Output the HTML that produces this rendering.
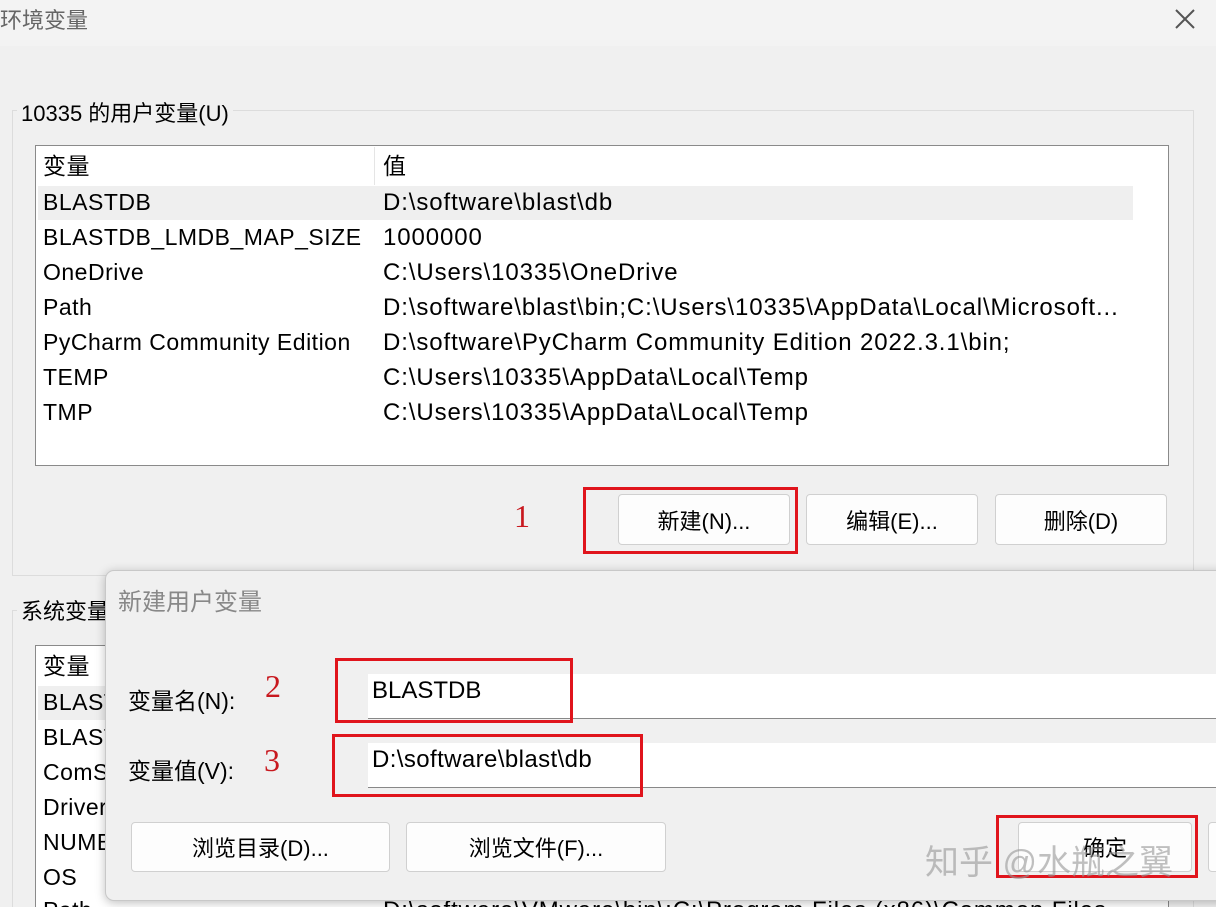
<!DOCTYPE html>
<html><head><meta charset="utf-8"><style>
*{margin:0;padding:0;box-sizing:border-box}
html,body{width:1216px;height:907px;overflow:hidden}
body{background:#f0f0f0;position:relative;font-family:"Liberation Sans","Noto Sans CJK SC",sans-serif;color:#000}
.a{position:absolute;white-space:nowrap}
.t{font-size:23px;line-height:35px;letter-spacing:.5px}
.v{font-size:24px;line-height:35px;letter-spacing:.9px}
.btn{position:absolute;background:#fdfdfd;border:1px solid #d0d0d0;border-radius:4px;font-size:22px;display:flex;align-items:center;justify-content:center}
.red{position:absolute;border:3px solid #e0141c}
.num{position:absolute;color:#c8181e;font-family:"Liberation Serif",serif;font-size:32px}
</style></head><body>
<div class="a" style="left:0;top:0;width:1216px;height:46px;background:#f3f3f3"></div>
<div class="a" style="left:0;top:3px;font-size:22px;color:#666">环境变量</div>
<svg class="a" style="left:1174px;top:8px" width="22" height="22"><path d="M2 2L20 20M20 2L2 20" stroke="#555" stroke-width="2"/></svg>

<div class="a" style="left:12px;top:110px;width:1182px;height:466px;border:1px solid #dcdcdc"></div>
<div class="a" style="left:17px;top:96px;font-size:22px;background:#f0f0f0;padding:0 4px">10335 的用户变量(U)</div>
<div class="a" style="left:35px;top:145px;width:1134px;height:321px;background:#fff;border:1px solid #8a8a8a"></div>
<div class="a" style="left:374px;top:147px;width:1px;height:38px;background:#e5e5e5"></div>
<div class="a" style="left:38px;top:186px;width:1095px;height:34px;background:#efefef"></div>
<div class="a t" style="left:43px;top:149px">变量</div><div class="a t" style="left:383px;top:149px">值</div>
<div class="a t" style="left:43px;top:185px">BLASTDB</div><div class="a v" style="left:383px;top:185px">D:\software\blast\db</div>
<div class="a t" style="left:43px;top:220px">BLASTDB_LMDB_MAP_SIZE</div><div class="a v" style="left:383px;top:220px">1000000</div>
<div class="a t" style="left:43px;top:255px">OneDrive</div><div class="a v" style="left:383px;top:255px">C:\Users\10335\OneDrive</div>
<div class="a t" style="left:43px;top:290px">Path</div><div class="a v" style="left:383px;top:290px">D:\software\blast\bin;C:\Users\10335\AppData\Local\Microsoft...</div>
<div class="a t" style="left:43px;top:325px">PyCharm Community Edition</div><div class="a v" style="left:383px;top:325px">D:\software\PyCharm Community Edition 2022.3.1\bin;</div>
<div class="a t" style="left:43px;top:360px">TEMP</div><div class="a v" style="left:383px;top:360px">C:\Users\10335\AppData\Local\Temp</div>
<div class="a t" style="left:43px;top:395px">TMP</div><div class="a v" style="left:383px;top:395px">C:\Users\10335\AppData\Local\Temp</div>

<div class="num" style="left:514px;top:498px">1</div>
<div class="btn" style="left:618px;top:494px;width:172px;height:51px">新建(N)...</div>
<div class="btn" style="left:806px;top:494px;width:172px;height:51px">编辑(E)...</div>
<div class="btn" style="left:995px;top:494px;width:172px;height:51px">删除(D)</div>
<div class="red" style="left:583px;top:487px;width:215px;height:67px"></div>

<div class="a" style="left:12px;top:610px;width:1182px;height:300px;border:1px solid #dcdcdc"></div>
<div class="a" style="left:17px;top:594px;font-size:22px;background:#f0f0f0;padding:0 4px">系统变量</div>
<div class="a" style="left:35px;top:645px;width:1134px;height:270px;background:#fff;border:1px solid #8a8a8a"></div>
<div class="a" style="left:38px;top:686px;width:80px;height:34px;background:#efefef"></div>
<div class="a t" style="left:43px;top:649px">变量</div>
<div class="a t" style="left:43px;top:685px">BLASTDB</div>
<div class="a t" style="left:43px;top:720px">BLASTDB</div>
<div class="a t" style="left:43px;top:755px">ComSpec</div>
<div class="a t" style="left:43px;top:790px">DriverData</div>
<div class="a t" style="left:43px;top:825px">NUMBER</div>
<div class="a t" style="left:43px;top:860px">OS</div>
<div class="a t" style="left:43px;top:893px">Path</div><div class="a v" style="left:383px;top:893px">D:\software\VMware\bin\;C:\Program Files (x86)\Common Files</div>

<div class="a" style="left:105px;top:570px;width:1130px;height:331px;background:#f0f0f0;border:1px solid #c8c8c8;border-radius:9px;box-shadow:0 2px 10px rgba(0,0,0,.25)"></div>
<div class="a" style="left:118px;top:582px;font-size:24px;color:#888">新建用户变量</div>
<div class="a" style="left:128px;top:682px;font-size:23px">变量名(N):</div>
<div class="num" style="left:265px;top:668px">2</div>
<div class="a" style="left:368px;top:674px;width:860px;height:45px;background:#fff;border-bottom:1.5px solid #888"></div>
<div class="a" style="left:372px;top:677px;font-size:24px">BLASTDB</div>
<div class="red" style="left:335px;top:658px;width:238px;height:65px"></div>
<div class="a" style="left:128px;top:752px;font-size:23px">变量值(V):</div>
<div class="num" style="left:264px;top:742px">3</div>
<div class="a" style="left:368px;top:743px;width:860px;height:45px;background:#fff;border-bottom:1.5px solid #888"></div>
<div class="a" style="left:372px;top:746px;font-size:24px;letter-spacing:.4px">D:\software\blast\db</div>
<div class="red" style="left:332px;top:734px;width:311px;height:63px"></div>

<div class="btn" style="left:131px;top:822px;width:259px;height:50px">浏览目录(D)...</div>
<div class="btn" style="left:406px;top:822px;width:260px;height:50px">浏览文件(F)...</div>
<div class="btn" style="left:1018px;top:822px;width:174px;height:50px">确定</div>
<div class="btn" style="left:1208px;top:822px;width:40px;height:50px"></div>
<div class="red" style="left:996px;top:815px;width:202px;height:63px"></div>
<div class="a" style="left:925px;top:835px;font-size:34px;color:rgba(150,150,150,.6)">知乎 @水瓶之翼</div>
</body></html>
